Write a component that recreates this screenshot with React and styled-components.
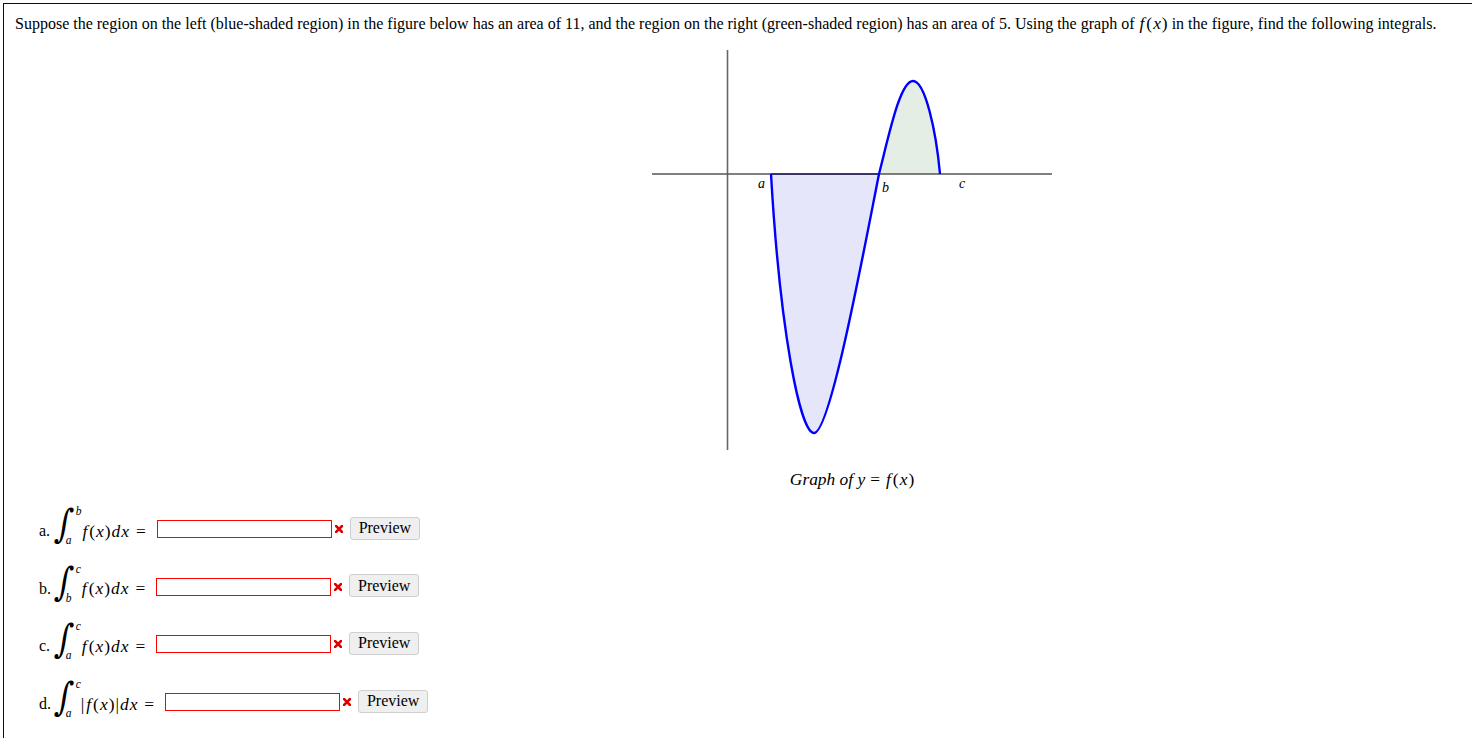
import React from "react";
import styled, { createGlobalStyle } from "styled-components";

const Global = createGlobalStyle`
  html, body { margin: 0; padding: 0; overflow: hidden; background: #fff; }
  body { font-family: "Liberation Serif", "Times New Roman", serif; font-size: 16px; color: #000; }
`;

const Frame = styled.div`
  margin: 3px 0 0 3px;
  border-top: 1px solid #000080;
  border-left: 1px solid #000080;
  padding: 10px 11px 40px 11px;
`;

const Prompt = styled.p`
  margin: 0;
  line-height: 18px;
  height: 18px;
  white-space: nowrap;
`;

const MathI = styled.span`
  font-family: "Liberation Serif", serif;
  font-style: italic;
  font-size: 17.4px;
  margin: ${(p) => p.$m || "0"};
`;

const MathR = styled.span`
  font-family: "Liberation Serif", serif;
  font-style: normal;
  font-size: 17.4px;
  margin: ${(p) => p.$m || "0"};
`;

const Figure = styled.figure`
  margin: 18px 0 0 637px;
  width: 400px;
  display: flex;
  flex-direction: column;
  align-items: center;
`;

const Caption = styled.figcaption`
  margin-top: 20px;
  line-height: 18px;
  white-space: nowrap;
`;

const Problems = styled.div`
  display: flex;
  flex-direction: column;
  gap: 19.7px;
  margin-top: 20px;
  padding-left: 24px;
`;

const Row = styled.div`
  display: flex;
  align-items: center;
  height: 38px;
`;

const Label = styled.span`
  width: 17px;
  font-size: 16px;
  position: relative;
  top: 3px;
`;

const Integral = styled.span`
  display: inline-flex;
  align-items: stretch;
  height: 40px;
  margin-right: 0;
`;

const IntSign = styled.span`
  font-family: "DejaVu Serif", serif;
  font-size: 32px;
  line-height: 40px;
  display: inline-block;
  transform: translateY(-4px) scaleY(1.22) skewX(-9deg);
`;

const Limits = styled.span`
  display: flex;
  flex-direction: column;
  justify-content: space-between;
  font-family: "Liberation Serif", serif;
  font-style: italic;
  font-size: 11.5px;
  line-height: 11px;
  padding-bottom: 2px;
`;

const Upper = styled.span`
  margin-left: 3px;
  margin-top: -2px;
`;

const Lower = styled.span`
  margin-left: -7px;
`;

const Expr = styled.span`
  position: relative;
  top: 3px;
  white-space: nowrap;
`;

const Answer = styled.input`
  box-sizing: border-box;
  width: 175px;
  height: 18px;
  margin: 2px 0 0 6px;
  border: 1px solid #ff0000;
  padding: 0;
  outline: none;
  background: #fff;
`;

const Mark = styled.svg`
  width: 8px;
  height: 8px;
  margin: 2px 0 0 3px;
`;

const PreviewButton = styled.button`
  box-sizing: border-box;
  width: 70px;
  height: 23px;
  margin: 0 0 0 7px;
  padding: 0;
  font-family: "Liberation Serif", serif;
  font-size: 16px;
  color: #000;
  background: #efefef;
  border: 1px solid #cfcfcf;
  border-radius: 3px;
`;

function Fx({ abs }) {
  return (
    <>
      {abs && <MathR $m="0 1px 0 0">|</MathR>}
      <MathI $m="0 2px 0 1px">f</MathI>
      <MathR>(</MathR>
      <MathI $m="0 1px">x</MathI>
      <MathR>)</MathR>
      {abs && <MathR $m="0 0 0 1px">|</MathR>}
    </>
  );
}

function XMark() {
  return (
    <Mark viewBox="0 0 8 8">
      <path d="M1 1 L7 7 M7 1 L1 7" stroke="#e00000" strokeWidth="2.6" strokeLinecap="square" />
    </Mark>
  );
}

function Graph() {
  const s1 = "C128,280 148,383 162,383";
  const s2 = "C178,383 210,210 227,124";
  const s3 = "C237,85 248,31 261,31";
  const s4 = "C273,31 284,80 288,124";
  return (
    <svg width="400" height="400" viewBox="0 0 400 400">
      <path d={`M119,124 ${s1} ${s2} Z`} fill="#e6e6fa" />
      <path d={`M227,124 ${s3} ${s4} Z`} fill="#e4eee4" />
      <line x1="75.5" y1="0" x2="75.5" y2="400" stroke="#666" strokeWidth="1.6" />
      <line x1="0" y1="124" x2="400" y2="124" stroke="#555" strokeWidth="1.6" />
      <line x1="119" y1="124" x2="227" y2="124" stroke="#222060" strokeWidth="1.6" />
      <path d={`M119,124 ${s1} ${s2} ${s3} ${s4}`} fill="none" stroke="#0000ff" strokeWidth="2.4" />
      <g fontFamily="Liberation Serif, serif" fontStyle="italic" fontSize="14" fill="#000">
        <text x="106" y="138">a</text>
        <text x="230" y="141.5">b</text>
        <text x="307" y="138">c</text>
      </g>
    </svg>
  );
}

const items = [
  { l: "a.", up: "b", lo: "a", abs: false },
  { l: "b.", up: "c", lo: "b", abs: false },
  { l: "c.", up: "c", lo: "a", abs: false },
  { l: "d.", up: "c", lo: "a", abs: true },
];

export default function App() {
  return (
    <>
      <Global />
      <Frame>
        <Prompt>
          Suppose the region on the left (blue-shaded region) in the figure below has an area of 11, and the region on the right (green-shaded region) has an area of 5. Using the graph of <Fx /> in the figure, find the following integrals.
        </Prompt>
        <Figure>
          <Graph />
          <Caption>
            <MathI>Graph of y</MathI>
            <MathR $m="0 5px">=</MathR>
            <Fx />
          </Caption>
        </Figure>
        <Problems>
          {items.map((it) => (
            <Row key={it.l}>
              <Label>{it.l}</Label>
              <Integral>
                <IntSign>∫</IntSign>
                <Limits>
                  <Upper>{it.up}</Upper>
                  <Lower>{it.lo}</Lower>
                </Limits>
              </Integral>
              <Expr>
                <Fx abs={it.abs} />
                <MathI $m="0 0 0 1px">d</MathI>
                <MathI $m="0 1px">x</MathI>
                <MathR $m="0 5px 0 6px">=</MathR>
              </Expr>
              <Answer type="text" />
              <XMark />
              <PreviewButton type="button">Preview</PreviewButton>
            </Row>
          ))}
        </Problems>
      </Frame>
    </>
  );
}
